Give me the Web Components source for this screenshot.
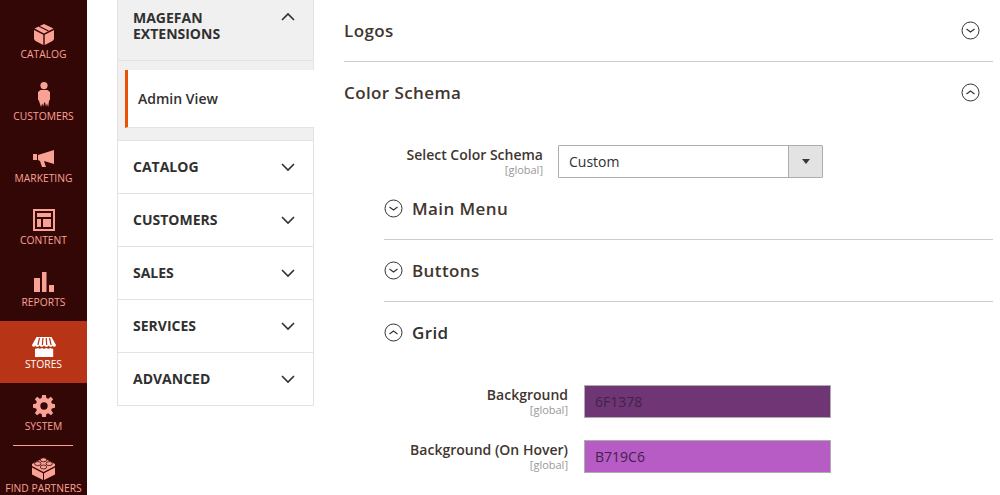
<!DOCTYPE html>
<html>
<head>
<meta charset="utf-8">
<style>
  html, body { margin: 0; height: 495px; overflow: hidden; background: #fff; font-family: "Open Sans", sans-serif; color: #303030; }
  body { display: flex; }
</style>
</head>
<body>
<admin-menu>
  <menu-item label="CATALOG"><svg viewBox="0 0 20 21" width="20" height="21"><path d="M10 0l9.500 4.600L10 9.400.5 4.600z" fill="currentColor"/><path d="M5 2.300l9.500 4.800" stroke="#340707" stroke-width="1.100"/><path d="M0 6l9.300 4.700V21l-7.800-4L0 15zM20 6l-9.300 4.700V21l7.800-4 1.500-2z" fill="currentColor"/></svg></menu-item>
  <menu-item label="CUSTOMERS" style="--shift:-3px"><svg viewBox="0 0 12 25" width="12" height="25"><circle cx="6" cy="3.600" r="3.600" fill="currentColor"/><path d="M2.500 8h7L12 10v7.500l-1 1.500-.8 6-1.200-3.500-1 3-1-4-.8 0-1 4-1-3L3 25 1 19l-1-1.500V10z" fill="currentColor"/></svg></menu-item>
  <menu-item label="MARKETING"><svg viewBox="0 0 22 17" width="22" height="17"><path d="M0 4h4v6H0z" fill="currentColor"/><path d="M5 5l16-5v14l-10-3 2 6-4 0-2-6-2-1z" fill="currentColor"/></svg></menu-item>
  <menu-item label="CONTENT"><svg viewBox="0 0 22 22" width="22" height="22"><path fill-rule="evenodd" d="M0 0h22v22H0zM2 2v18h18V2z" fill="currentColor"/><path d="M4 4h14v4H4zM4 10h4v8H4zM10 10h8v8h-8z" fill="currentColor"/></svg></menu-item>
  <menu-item label="REPORTS"><svg viewBox="0 0 20 20" width="20" height="20"><path d="M0 6h6v14H0zM8 0h4.500v20H8zM15 13h5v7h-5z" fill="currentColor"/></svg></menu-item>
  <menu-item label="STORES" active style="--shift:6px"><svg viewBox="0 0 24 20" width="24" height="20"><path d="M4.500 0h15L24 8c0 2-2.800 2.300-3.300.4-.5 1.900-3.200 1.900-4.200 0-.7 1.900-3.200 1.900-4.500 0-1 1.900-3.500 1.900-4.500 0-1 1.900-3.700 1.900-4.200 0C2.800 10.300 0 10 0 8z" fill="currentColor"/><path d="M3 11.500c1 .4 1.800.2 2.800-.4 1.400 1 2.800 1 4.200 0 1.400 1 2.800 1 4.200 0 1.400 1 2.800 1 4.200 0 1 .6 1.800.8 2.800.4V20H3z" fill="currentColor"/><path d="M7.500 1L5.900 8M11 1l-.6 7M14.200 1l.5 7M17.500 1l1.600 7" stroke="#b83416" stroke-width="1.200"/></svg></menu-item>
  <menu-item label="SYSTEM"><svg viewBox="0 0 24 24" width="22" height="22"><path fill-rule="evenodd" d="M10 0h4l.6 3.400 2 .8L19.500 2l2.500 2.500-2.200 2.900.8 2L24 10v4l-3.400.6-.8 2 2.200 2.900-2.500 2.500-2.900-2.200-2 .8L14 24h-4l-.6-3.400-2-.8L4.500 22 2 19.500l2.200-2.900-.8-2L0 14v-4l3.400-.6.800-2L2 4.500 4.500 2l2.900 2.200 2-.8zM12 8a4 4 0 100 8 4 4 0 000-8z" fill="currentColor"/></svg></menu-item>
  <menu-item label="FIND PARTNERS" divider><svg viewBox="0 0 23 23" width="23" height="23"><path d="M11.500 1L23 7v2l-11.500 6L0 9V7z" fill="currentColor"/><g fill="currentColor" stroke="#340707" stroke-width=".8"><ellipse cx="11.500" cy="2.800" rx="3.200" ry="2"/><ellipse cx="5.800" cy="6.600" rx="3.200" ry="2"/><ellipse cx="17.200" cy="6.600" rx="3.200" ry="2"/><ellipse cx="11.500" cy="10" rx="3.200" ry="2"/></g><path d="M0 10.500l11 5.700V23L0 17.500zM23 10.500l-11 5.700V23l11-5.500z" fill="currentColor"/></svg></menu-item>
</admin-menu>
<config-tabs>
  <tab-group label="MAGEFAN EXTENSIONS" open></tab-group>
  <tab-link>Admin View</tab-link>
  <tab-group label="CATALOG"></tab-group>
  <tab-group label="CUSTOMERS"></tab-group>
  <tab-group label="SALES"></tab-group>
  <tab-group label="SERVICES"></tab-group>
  <tab-group label="ADVANCED"></tab-group>
</config-tabs>
<config-main>
  <section-head label="Logos"></section-head>
  <section-head label="Color Schema" open></section-head>
  <config-row label="Select Color Schema" style="--label:199px;--gap:15px;margin:21px 0 0"><select-box value="Custom"></select-box></config-row>
  <sub-head label="Main Menu"></sub-head>
  <sub-head label="Buttons"></sub-head>
  <sub-head label="Grid" open></sub-head>
  <config-row label="Background" first><color-input value="6F1378" color="#6f3574"></color-input></config-row>
  <config-row label="Background (On Hover)"><color-input value="B719C6" color="#b75cc4"></color-input></config-row>
</config-main>
<script>
const chevron = (up) => `<svg viewBox="0 0 16 10" width="16" height="10"><path d="${up ? 'M2 8l6-6 6 6' : 'M2 2l6 6 6-6'}" fill="none" stroke="currentColor" stroke-width="1.600"/></svg>`;
const circleChevron = (up) => `<svg viewBox="0 0 19 19" width="19" height="19"><circle cx="9.500" cy="9.500" r="8.500" fill="none" stroke="#303030" stroke-width="1"/><path d="${up ? 'M5.500 11L9.500 8l4 3' : 'M5.500 8l4 3 4-3'}" fill="none" stroke="#303030" stroke-width="1.100"/></svg>`;

class AdminMenu extends HTMLElement {
  constructor() {
    super();
    this.attachShadow({ mode: 'open' });
    this.shadowRoot.innerHTML = `
      <style>
        :host { display: block; flex: none; width: 87px; height: 495px; background: #340707; padding-top: 11px; box-sizing: border-box; overflow: hidden; }
      </style>
      <slot></slot>`;
  }
}
customElements.define('admin-menu', AdminMenu);

class MenuItem extends HTMLElement {
  constructor() {
    super();
    this.attachShadow({ mode: 'open' });
    this.shadowRoot.innerHTML = `
      <style>
        :host { display: flex; flex-direction: column; align-items: center; position: relative; height: 62px; box-sizing: border-box; padding-top: 10px; color: #f9a194; font-size: 10.300px; line-height: 14px; }
        :host([active]) { background: #b83416; color: #fff; }
        .icon { height: 26px; display: flex; align-items: center; justify-content: center; }
        ::slotted(svg) { position: relative; top: calc(var(--shift, 0px) / 2); }
        .label { white-space: nowrap; }
        :host([divider])::before { content: ""; position: absolute; top: 0; left: 13px; width: 60px; height: 1px; background: #f9a194; }
      </style>
      <div class="icon"><slot></slot></div>
      <div class="label">${this.getAttribute('label')}</div>`;
  }
}
customElements.define('menu-item', MenuItem);

class ConfigTabs extends HTMLElement {
  constructor() {
    super();
    this.attachShadow({ mode: 'open' });
    this.shadowRoot.innerHTML = `
      <style>
        :host { display: block; flex: none; width: 197px; margin-left: 30px; box-sizing: border-box; border: 1px solid #e3e3e3; border-top: 0; align-self: flex-start; background: #f0f0f0; }
      </style>
      <slot></slot>`;
  }
}
customElements.define('config-tabs', ConfigTabs);

class TabGroup extends HTMLElement {
  constructor() {
    super();
    this.attachShadow({ mode: 'open' });
    const open = this.hasAttribute('open');
    this.shadowRoot.innerHTML = `
      <style>
        :host { display: flex; justify-content: space-between; box-sizing: border-box; height: 53px; padding: 0 17px 0 15px; background: #fff; border-top: 1px solid #e3e3e3; font-size: 14px; font-weight: 700; line-height: 16px; color: #303030; align-items: center; }
        :host([open]) { background: #f0f0f0; border-top: 0; border-bottom: 1px solid #e3e3e3; height: 61px; align-items: flex-start; padding-top: 10px; }
        span { max-width: 110px; }
        svg { display: block; }
        :host([open]) svg { margin-top: 2px; }
      </style>
      <span>${this.getAttribute('label')}</span>${chevron(open)}`;
  }
}
customElements.define('tab-group', TabGroup);

class TabLink extends HTMLElement {
  constructor() {
    super();
    this.attachShadow({ mode: 'open' });
    this.shadowRoot.innerHTML = `
      <style>
        :host { display: block; box-sizing: border-box; height: 58px; margin: 9px -1px 12px 7px; padding-left: 10px; background: #fff; border-left: 3px solid #eb5202; border-bottom: 1px solid #e3e3e3; font-size: 14px; font-weight: 600; line-height: 57px; color: #303030; }
      </style>
      <slot></slot>`;
  }
}
customElements.define('tab-link', TabLink);

class ConfigMain extends HTMLElement {
  constructor() {
    super();
    this.attachShadow({ mode: 'open' });
    this.shadowRoot.innerHTML = `
      <style>
        :host { display: block; flex: 1; min-width: 0; padding: 0 7px 0 30px; }
      </style>
      <slot></slot>`;
  }
}
customElements.define('config-main', ConfigMain);

class SectionHead extends HTMLElement {
  constructor() {
    super();
    this.attachShadow({ mode: 'open' });
    const open = this.hasAttribute('open');
    this.shadowRoot.innerHTML = `
      <style>
        :host { display: flex; justify-content: space-between; align-items: center; box-sizing: border-box; height: 62px; padding-right: 13px; font-size: 17px; font-weight: 600; letter-spacing: .4px; color: #41362f; border-bottom: 1px solid #cccccc; }
        :host([open]) { border-bottom-color: transparent; }
      </style>
      <span>${this.getAttribute('label')}</span>${circleChevron(open)}`;
  }
}
customElements.define('section-head', SectionHead);

class SubHead extends HTMLElement {
  constructor() {
    super();
    this.attachShadow({ mode: 'open' });
    const open = this.hasAttribute('open');
    this.shadowRoot.innerHTML = `
      <style>
        :host { display: flex; align-items: center; gap: 9px; box-sizing: border-box; height: 62px; margin-left: 40px; font-size: 17px; font-weight: 600; letter-spacing: .4px; color: #41362f; border-bottom: 1px solid #cccccc; }
        :host([open]) { border-bottom-color: transparent; color: #303030; }
      </style>
      ${circleChevron(open)}<span>${this.getAttribute('label')}</span>`;
  }
}
customElements.define('sub-head', SubHead);

class ConfigRow extends HTMLElement {
  constructor() {
    super();
    this.attachShadow({ mode: 'open' });
    this.shadowRoot.innerHTML = `
      <style>
        :host { display: flex; align-items: flex-start; gap: var(--gap, 16px); margin-bottom: 22px; }
        :host([first]) { margin-top: 21px; }
        .label { width: var(--label, 224px); text-align: right; font-size: 14px; font-weight: 600; line-height: 18px; color: #41362f; padding-top: 1px; }
        .scope { display: block; font-size: 11px; font-weight: 400; line-height: 11px; color: #999; }
      </style>
      <div class="label">${this.getAttribute('label')}<span class="scope">[global]</span></div>
      <slot></slot>`;
  }
}
customElements.define('config-row', ConfigRow);

class SelectBox extends HTMLElement {
  constructor() {
    super();
    this.attachShadow({ mode: 'open' });
    this.shadowRoot.innerHTML = `
      <style>
        :host { display: flex; box-sizing: border-box; width: 265px; height: 33px; border: 1px solid #adadad; border-radius: 1px; font-size: 14px; line-height: 31px; color: #303030; background: #fff; }
        .val { flex: 1; padding-left: 10px; }
        .arrow { width: 33px; background: #e3e3e3; border-left: 1px solid #adadad; display: flex; align-items: center; justify-content: center; }
        .arrow i { width: 0; height: 0; border: 4px solid transparent; border-top: 5px solid #41362f; border-bottom: 0; }
      </style>
      <div class="val">${this.getAttribute('value')}</div>
      <div class="arrow"><i></i></div>`;
  }
}
customElements.define('select-box', SelectBox);

class ColorInput extends HTMLElement {
  constructor() {
    super();
    this.attachShadow({ mode: 'open' });
    this.shadowRoot.innerHTML = `
      <style>
        :host { display: block; box-sizing: border-box; width: 247px; height: 33px; padding-left: 10px; border: 1px solid #adadad; background: ${this.getAttribute('color')}; font-size: 14px; line-height: 31px; color: #41234a; }
      </style>
      ${this.getAttribute('value')}`;
  }
}
customElements.define('color-input', ColorInput);
</script>
</body>
</html>
